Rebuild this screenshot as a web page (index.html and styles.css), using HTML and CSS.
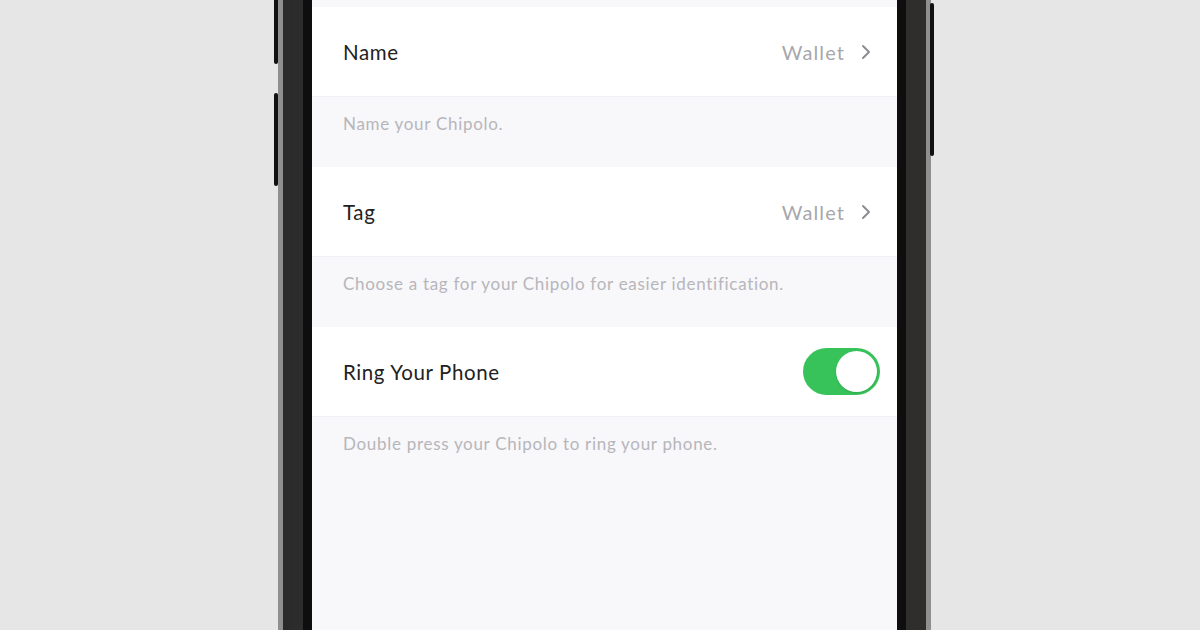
FILE: index.html
```html
<!DOCTYPE html>
<html lang="en">
<head>
    <meta charset="UTF-8">
    <meta name="viewport" content="width=device-width, initial-scale=1.0">
    <title>Chipolo Settings</title>
<link rel="stylesheet" href="styles.css">
</head>
<body>
    <!-- Phone frame -->
    <div class="phone">
        <span class="side-btn btn-left-1"></span>
        <span class="side-btn btn-left-2"></span>
        <span class="side-btn btn-right"></span>
        <div class="bezel">
            <div class="rim">
                <div class="screen">
                    <div class="footer footer-top"></div>

                    <!-- Name -->
                    <div class="row">
                        <span class="label">Name</span>
                        <span class="value">Wallet</span>
                        <svg class="chevron" viewBox="0 0 10 16"><path d="M2 2 L8 8 L2 14" /></svg>
                    </div>
                    <div class="footer">Name your Chipolo.</div>

                    <!-- Tag -->
                    <div class="row">
                        <span class="label">Tag</span>
                        <span class="value">Wallet</span>
                        <svg class="chevron" viewBox="0 0 10 16"><path d="M2 2 L8 8 L2 14" /></svg>
                    </div>
                    <div class="footer">Choose a tag for your Chipolo for easier identification.</div>

                    <!-- Ring your phone -->
                    <div class="row row-switch">
                        <span class="label">Ring Your Phone</span>
                        <div class="switch on"><span class="knob"></span></div>
                    </div>
                    <div class="footer footer-last">Double press your Chipolo to ring your phone.</div>
                </div>
            </div>
        </div>
    </div>
</body>
</html>
```

FILE: styles.css
```css
* {
    box-sizing: border-box;
    margin: 0;
    padding: 0;
}

body {
    background-color: #e6e6e6;
    font-family: Lato, "Noto Sans", sans-serif;
    height: 630px;
    overflow: hidden;
    display: flex;
    justify-content: center;
    padding-left: 9px;
}

/* frame layers, outside in */
.phone {
    position: relative;
    width: 653px;
    height: 630px;
    background-color: #8f8f8f;
    padding: 0 5px;
}
.bezel {
    height: 100%;
    background: linear-gradient(to right, #2b2a2a, #4a4744 35%, #383634 70%, #2e2d2c);
    padding: 0 20px;
}
.rim {
    height: 100%;
    background-color: #0e0e0e;
    padding: 0 9px;
}
.screen {
    height: 100%;
    background-color: #f8f7fa;
    display: flex;
    flex-direction: column;
}

.side-btn {
    position: absolute;
    width: 4px;
    background-color: #111;
    border-radius: 2px;
}
.btn-left-1 {
    left: -4px;
    top: -4px;
    height: 68px;
}
.btn-left-2 {
    left: -4px;
    top: 93px;
    height: 93px;
}
.btn-right {
    right: -3px;
    top: 3px;
    height: 153px;
}

/* settings list */
.row {
    height: 90px;
    background-color: #fff;
    display: flex;
    align-items: center;
    padding: 0 26px 0 31px;
    border-bottom: 1px solid #f2f1f5;
}
.row-switch {
    padding-right: 17px;
}
.label {
    flex: 1;
    font-size: 20.5px;
    color: #222;
    letter-spacing: 0.6px;
}
.value {
    font-size: 20px;
    color: #a7a7ab;
    margin-right: 16px;
    letter-spacing: 1.1px;
}
.chevron {
    width: 10px;
    height: 16px;
    fill: none;
    stroke: #8d8d92;
    stroke-width: 2;
    stroke-linecap: round;
    stroke-linejoin: round;
}

.footer {
    height: 70px;
    padding: 16px 31px 0;
    font-size: 17px;
    color: #b6b6ba;
    letter-spacing: 0.7px;
}
.footer-top {
    height: 7px;
    padding: 0;
}
.footer-last {
    flex: 1;
}

/* toggle, iOS style */
.switch {
    width: 77px;
    height: 47px;
    border-radius: 24px;
    background-color: #eee;
    position: relative;
}
.switch.on {
    background-color: #38c35a;
}
.knob {
    position: absolute;
    top: 3px;
    right: 3px;
    width: 41px;
    height: 41px;
    border-radius: 50%;
    background-color: #fff;
    box-shadow: 0 1px 2px rgba(0, 0, 0, 0.15);
}
```
